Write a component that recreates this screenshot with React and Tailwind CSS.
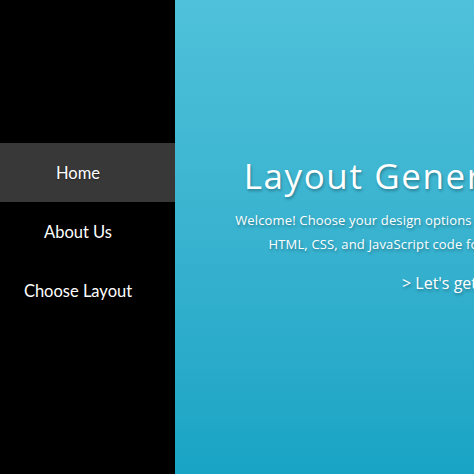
import React from "react";

export default function App() {
  const items = ["Home", "About Us", "Choose Layout"];
  return (
    <div className="flex w-[474px] h-[474px] overflow-hidden">
      <aside className="w-[175px] shrink-0 bg-black flex flex-col pt-[143px] font-['Lato',sans-serif]">
        {items.map((t, i) => (
          <div
            key={t}
            className={`h-[59px] flex items-center justify-center pt-[2px] pr-[19px] text-[16.5px] text-white [text-shadow:0_1px_2px_rgba(0,0,0,0.4)] ${i === 0 ? "bg-[#383838]" : ""}`}
          >
            {t}
          </div>
        ))}
      </aside>
      <main className="w-[450px] shrink-0 h-full bg-gradient-to-b from-[#4fc1da] to-[#18a4c5] flex flex-col items-center pt-[154px] text-white font-['Open_Sans',sans-serif] [text-shadow:1px_2px_3px_rgba(0,0,0,0.3)]">
        <h1 className="text-[35px] leading-[44px] tracking-[1.6px] whitespace-nowrap">Layout Generator</h1>
        <p className="mt-[10px] text-[13px] leading-[24px] tracking-[0.15px] text-center whitespace-nowrap">
          Welcome! Choose your design options and we'll write
          <br />
          HTML, CSS, and JavaScript code for you all.
        </p>
        <a className="self-start ml-[227px] mt-[15px] text-[16px] whitespace-nowrap">&gt; Let's get started</a>
      </main>
    </div>
  );
}
